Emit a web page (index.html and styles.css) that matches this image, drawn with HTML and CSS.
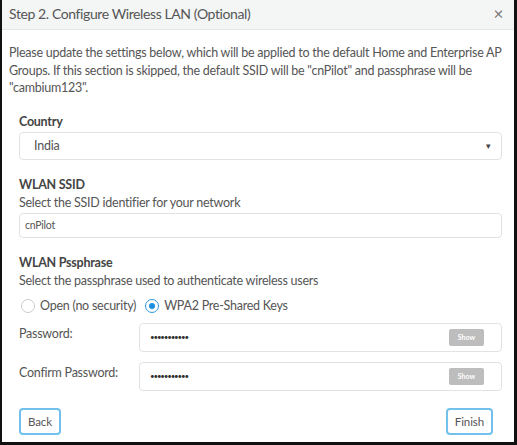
FILE: index.html
```html
<!DOCTYPE html>
<html>
<head>
<meta charset="utf-8">
<link rel="stylesheet" href="styles.css">
</head>
<body>
<div class="modal">
  <div class="modal-header">
    <h1 class="title">Step 2. Configure Wireless LAN (Optional)</h1>
    <span class="close">&times;</span>
  </div>
  <div class="modal-body">
    <p class="intro">Please update the settings below, which will be applied to the default Home and Enterprise AP Groups. If this section is skipped, the default SSID will be "cnPilot" and passphrase will be "cambium123".</p>
    <div class="form">
      <div class="group">
        <div class="label">Country</div>
        <div class="select"><span>India</span><span class="caret">&#9662;</span></div>
      </div>
      <div class="group">
        <div class="label">WLAN SSID</div>
        <div class="help">Select the SSID identifier for your network</div>
        <div class="input ssid">cnPilot</div>
      </div>
      <div class="group">
        <div class="label">WLAN Pssphrase</div>
        <div class="help">Select the passphrase used to authenticate wireless users</div>
        <div class="radios">
          <label class="radio"><span class="circle"></span>Open (no security)</label>
          <label class="radio"><span class="circle checked"></span>WPA2 Pre-Shared Keys</label>
        </div>
        <div class="pw-row">
          <div class="pw-label">Password:</div>
          <div class="pw-input"><span class="dots">•••••••••••</span><span class="show">Show</span></div>
        </div>
        <div class="pw-row">
          <div class="pw-label">Confirm Password:</div>
          <div class="pw-input"><span class="dots">•••••••••••</span><span class="show">Show</span></div>
        </div>
      </div>
    </div>
    <div class="footer">
      <button class="btn">Back</button>
      <button class="btn">Finish</button>
    </div>
  </div>
</div>
</body>
</html>
```
FILE: styles.css
```css
* { box-sizing: border-box; }
html, body { margin: 0; padding: 0; background: #fff; }
body {
  font-family: Lato, "Liberation Sans", sans-serif;
  color: #555;
  width: 517px;
  height: 445px;
  overflow: hidden;
  letter-spacing: -0.25px;
}
.modal {
  width: 517px;
  height: 445px;
  border-left: 2px solid #111;
  border-right: 3px solid #111;
  border-bottom: 3px solid #111;
  display: flex;
  flex-direction: column;
}
.modal-header {
  height: 30px;
  background: #f4f5f5;
  border-bottom: 1px solid #e6e6e6;
  display: flex;
  align-items: center;
  justify-content: space-between;
  padding: 0 11px 2px 7px;
}
.title {
  margin: 0;
  font-size: 14px;
  font-weight: 400;
  letter-spacing: -0.4px;
  color: #555;
}
.close {
  font-size: 17px;
  color: #777;
  font-weight: 400;
  line-height: 1;
}
.modal-body { flex: 1; display: flex; flex-direction: column; }
.intro {
  margin: 14px 6px 0 7px;
  font-size: 12.5px;
  line-height: 17.5px;
  color: #555;
}
.form { padding: 0 12px 0 17px; }
.group { margin-top: 16px; }
.group:first-child { margin-top: 16px; }
.label {
  font-size: 12.5px;
  font-weight: 700;
  color: #444;
  line-height: 18px;
}
.help {
  font-size: 12.5px;
  line-height: 18px;
  color: #555;
}
.select {
  margin-top: 1px;
  height: 28px;
  border: 1px solid #e0e3e5;
  border-radius: 4px;
  display: flex;
  align-items: center;
  justify-content: space-between;
  padding: 0 10px 0 14px;
  font-size: 12.5px;
  color: #555;
}
.caret { font-size: 9px; color: #444; }
.input {
  height: 25px;
  border: 1px solid #e0e3e5;
  border-radius: 4px;
  display: flex;
  align-items: center;
  padding: 0 5px;
  font-size: 10.5px;
  color: #555;
}
.ssid { margin-top: 1px; }
.radios {
  display: flex;
  gap: 7px;
  margin-top: 7px;
  height: 18px;
  align-items: center;
}
.radio {
  display: flex;
  align-items: center;
  font-size: 12.5px;
  color: #555;
  gap: 5px;
}
.circle {
  width: 14px;
  height: 14px;
  border: 1px solid #c8ccd0;
  border-radius: 50%;
  margin-left: 2px;
  position: relative;
}
.circle.checked { border-color: #2c9be4; }
.circle.checked::after {
  content: "";
  position: absolute;
  left: 3px; top: 3px;
  width: 6px; height: 6px;
  border-radius: 50%;
  background: #1e8fe0;
}
.pw-row {
  display: flex;
  margin-top: 10px;
}
.radios + .pw-row { margin-top: 8px; }
.pw-label {
  width: 120px;
  font-size: 12.5px;
  color: #555;
  padding-top: 3px;
}
.pw-input {
  flex: 1;
  height: 29px;
  border: 1px solid #e0e3e5;
  border-radius: 4px;
  display: flex;
  align-items: center;
  justify-content: space-between;
  padding: 0 17px 0 10px;
}
.dots { font-size: 8px; letter-spacing: -1.2px; color: #333; }
.show {
  width: 35px;
  height: 17px;
  background: #bdbdbd;
  color: #fff;
  font-size: 7px;
  font-weight: 700;
  letter-spacing: 0;
  border-radius: 2px;
  display: flex;
  align-items: center;
  justify-content: center;
}
.footer {
  display: flex;
  justify-content: space-between;
  padding: 0 21px 0 17px;
  margin-top: 17px;
}
.btn {
  height: 27px;
  padding: 0 7px;
  background: #fff;
  border: 2px solid #72c0ec;
  border-radius: 4px;
  font-family: Lato, "Liberation Sans", sans-serif;
  font-size: 11.5px;
  letter-spacing: -0.1px;
  color: #555;
}
```
